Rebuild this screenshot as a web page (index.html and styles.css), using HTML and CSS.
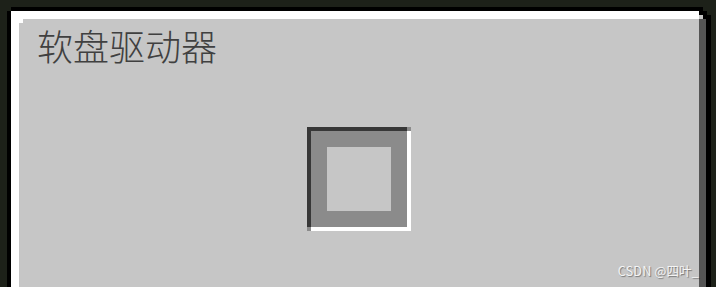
FILE: index.html
```html
<!DOCTYPE html>
<html lang="zh">
<head>
<meta charset="utf-8">
<title>软盘驱动器</title>
<link rel="stylesheet" href="styles.css">
</head>
<body>
<div class="frame">
  <div class="bevel">
    <div class="panel">
      <h1 class="title">软盘驱动器</h1>
      <div class="slot"><div class="slot-inner"></div></div>
      <div class="watermark">CSDN @四叶_</div>
    </div>
    <div class="shade"></div>
  </div>
</div>
</body>
</html>
```
FILE: styles.css
```css
html, body {
  margin: 0;
  padding: 0;
}
body {
  width: 716px;
  height: 287px;
  overflow: hidden;
  background: #1d2119;
}
.frame {
  position: relative;
  box-sizing: border-box;
  margin: 7px 5px 0 7px;
  height: 280px;
  padding: 4px 5px 0 4px;
  background: linear-gradient(#1d2119, #1d2119) 0 0 / 4px 4px no-repeat, #000;
}
.frame::before,
.frame::after {
  content: "";
  position: absolute;
  background: #1d2119;
}
.frame::before {
  top: 0;
  right: 0;
  width: 8px;
  height: 4px;
}
.frame::after {
  top: 4px;
  right: 0;
  width: 4px;
  height: 4px;
}
.bevel {
  position: relative;
  box-sizing: border-box;
  display: flex;
  height: 276px;
  padding: 8px 0 0 8px;
  background: #fff;
}
.bevel::after {
  content: "";
  position: absolute;
  top: 0;
  right: 0;
  width: 7px;
  height: 8px;
  background: linear-gradient(#000 0 4px, transparent 4px) 0 0 / 4px 8px no-repeat,
              linear-gradient(#c6c6c6, #c6c6c6) 0 4px / 4px 4px no-repeat,
              #000;
}
.panel {
  position: relative;
  flex: 1;
  display: flex;
  flex-direction: column;
  align-items: center;
  background: #c6c6c6;
}
.panel::before {
  content: "";
  position: absolute;
  top: 0;
  left: 0;
  width: 4px;
  height: 4px;
  background: #fff;
}
.shade {
  width: 7px;
  background: #555;
}
.title {
  align-self: flex-start;
  margin: 0;
  padding: 8px 0 0 18px;
  font-family: "Noto Sans CJK SC", "Noto Sans", sans-serif;
  font-size: 36px;
  font-weight: 300;
  line-height: 36px;
  color: #404040;
}
.slot {
  position: relative;
  box-sizing: border-box;
  margin-top: 64px;
  width: 104px;
  height: 104px;
  padding: 20px;
  background: #8b8b8b;
  box-shadow: inset 4px 4px 0 #373737, inset -4px -4px 0 #fff;
}
.slot::before,
.slot::after {
  content: "";
  position: absolute;
  width: 4px;
  height: 4px;
  background: #8b8b8b;
}
.slot::before {
  top: 0;
  right: 0;
}
.slot::after {
  bottom: 0;
  left: 0;
}
.slot-inner {
  width: 64px;
  height: 64px;
  background: #c6c6c6;
}
.watermark {
  position: absolute;
  right: 0;
  bottom: 8px;
  font-family: "Noto Sans CJK SC", "Noto Sans", sans-serif;
  font-size: 12.5px;
  line-height: 16px;
  letter-spacing: 0.2px;
  color: #f4f4f4;
  text-shadow: 1px 1px 1px rgba(0, 0, 0, 0.4);
  white-space: nowrap;
}
```
